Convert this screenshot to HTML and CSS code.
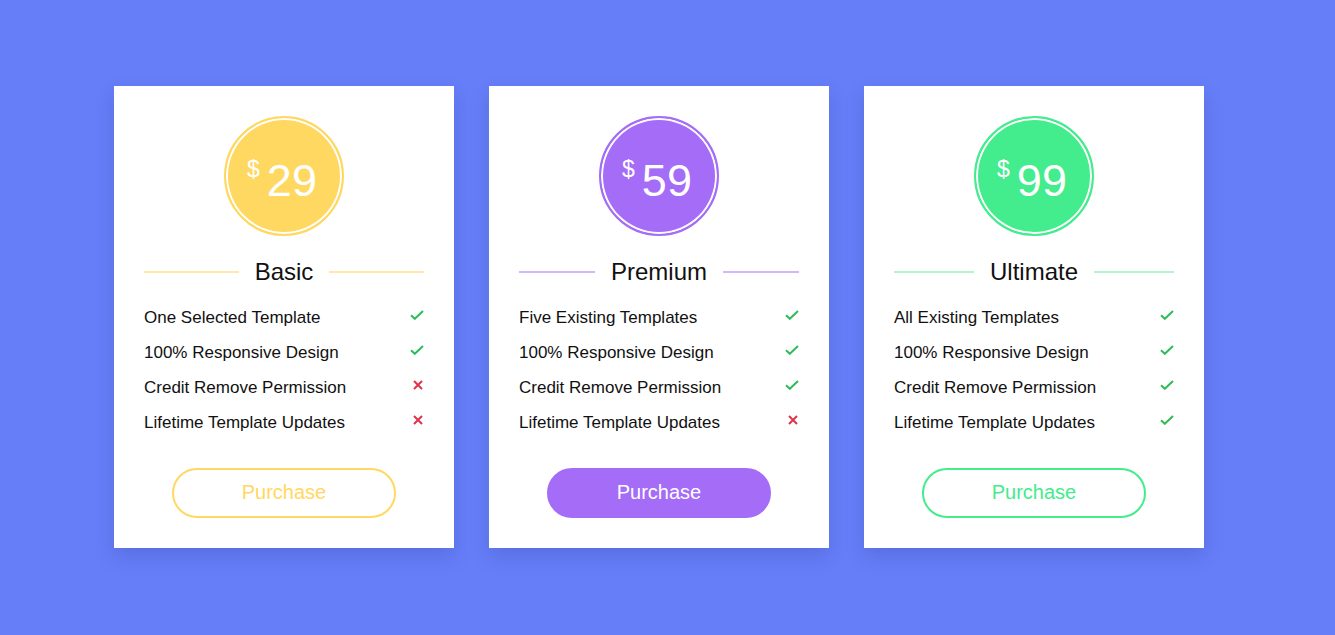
FILE: index.html
```html
<!DOCTYPE html>
<html>
<head>
<meta charset="utf-8">
<link rel="stylesheet" href="styles.css">
</head>
<body>
<div class="pricing">
  <div class="card yellow">
    <div class="price"><span class="cur">$</span><span class="amt">29</span></div>
    <div class="title"><span class="line"></span><h2>Basic</h2><span class="line"></span></div>
    <ul class="features">
      <li><span>One Selected Template</span><svg class="ok" viewBox="0 0 14 10"><path d="M1 5.2 L4.8 8.8 L13 1"/></svg></li>
      <li><span>100% Responsive Design</span><svg class="ok" viewBox="0 0 14 10"><path d="M1 5.2 L4.8 8.8 L13 1"/></svg></li>
      <li><span>Credit Remove Permission</span><svg class="no" viewBox="0 0 10 10"><path d="M1 1 L9 9 M9 1 L1 9"/></svg></li>
      <li><span>Lifetime Template Updates</span><svg class="no" viewBox="0 0 10 10"><path d="M1 1 L9 9 M9 1 L1 9"/></svg></li>
    </ul>
    <button class="btn">Purchase</button>
  </div>
  <div class="card purple">
    <div class="price"><span class="cur">$</span><span class="amt">59</span></div>
    <div class="title"><span class="line"></span><h2>Premium</h2><span class="line"></span></div>
    <ul class="features">
      <li><span>Five Existing Templates</span><svg class="ok" viewBox="0 0 14 10"><path d="M1 5.2 L4.8 8.8 L13 1"/></svg></li>
      <li><span>100% Responsive Design</span><svg class="ok" viewBox="0 0 14 10"><path d="M1 5.2 L4.8 8.8 L13 1"/></svg></li>
      <li><span>Credit Remove Permission</span><svg class="ok" viewBox="0 0 14 10"><path d="M1 5.2 L4.8 8.8 L13 1"/></svg></li>
      <li><span>Lifetime Template Updates</span><svg class="no" viewBox="0 0 10 10"><path d="M1 1 L9 9 M9 1 L1 9"/></svg></li>
    </ul>
    <button class="btn filled">Purchase</button>
  </div>
  <div class="card green">
    <div class="price"><span class="cur">$</span><span class="amt">99</span></div>
    <div class="title"><span class="line"></span><h2>Ultimate</h2><span class="line"></span></div>
    <ul class="features">
      <li><span>All Existing Templates</span><svg class="ok" viewBox="0 0 14 10"><path d="M1 5.2 L4.8 8.8 L13 1"/></svg></li>
      <li><span>100% Responsive Design</span><svg class="ok" viewBox="0 0 14 10"><path d="M1 5.2 L4.8 8.8 L13 1"/></svg></li>
      <li><span>Credit Remove Permission</span><svg class="ok" viewBox="0 0 14 10"><path d="M1 5.2 L4.8 8.8 L13 1"/></svg></li>
      <li><span>Lifetime Template Updates</span><svg class="ok" viewBox="0 0 14 10"><path d="M1 5.2 L4.8 8.8 L13 1"/></svg></li>
    </ul>
    <button class="btn">Purchase</button>
  </div>
</div>
</body>
</html>
```

FILE: styles.css
```css
* { box-sizing: border-box; }
html, body { margin: 0; padding: 0; }
body {
  background: #667ef8;
  font-family: "Liberation Sans", Arial, sans-serif;
  height: 635px;
  overflow: hidden;
}
.pricing {
  display: flex;
  gap: 35px;
  padding: 86px 0 0 114px;
}
.card {
  width: 340px;
  background: #fff;
  padding: 30px 30px 30px;
  display: flex;
  flex-direction: column;
  align-items: center;
  box-shadow: 0 8px 18px rgba(30, 40, 120, 0.18);
}
.yellow { --c: #ffd861; --l: #ffeaa9; }
.purple { --c: #a46cf7; --l: #d3b7fb; }
.green { --c: #43ec8c; --l: #b0f7cf; }
.price {
  width: 120px;
  height: 120px;
  border-radius: 50%;
  background: var(--c);
  border: 2px solid var(--c);
  box-shadow: inset 0 0 0 2px #fff;
  display: flex;
  justify-content: center;
  align-items: flex-start;
  color: #fff;
  padding-top: 34px;
  padding-right: 4px;
}
.cur {
  font-size: 23px;
  line-height: 1;
  margin-right: 7px;
  margin-top: 6px;
}
.amt {
  font-size: 45px;
  line-height: 1;
  margin-top: 6px;
}
.title {
  align-self: stretch;
  display: flex;
  align-items: center;
  gap: 16px;
  margin: 21px 0 13px;
  height: 30px;
}
.title .line {
  flex: 1;
  height: 2px;
  background: var(--l);
}
.title h2 {
  margin: 0;
  font-weight: normal;
  font-size: 24px;
  color: #111;
  line-height: 30px;
}
.features {
  list-style: none;
  margin: 0;
  padding: 0;
  align-self: stretch;
}
.features li {
  height: 35px;
  display: flex;
  align-items: center;
  justify-content: space-between;
  font-size: 17px;
  color: #111;
}
.features svg {
  fill: none;
  stroke-width: 2;
}
.ok {
  width: 14px;
  height: 10px;
  stroke: #2ebc5a;
  margin-top: -5px;
}
.no {
  width: 10px;
  height: 10px;
  stroke: #e0334a;
  margin-right: 1px;
  margin-top: -5px;
}
.btn {
  margin-top: 28px;
  width: 224px;
  height: 50px;
  border-radius: 25px;
  border: 2px solid var(--c);
  background: #fff;
  color: var(--c);
  font-family: "Liberation Sans", Arial, sans-serif;
  font-size: 20px;
  padding: 0 0 2px;
  cursor: pointer;
}
.btn.filled {
  background: var(--c);
  color: #fff;
}
```
